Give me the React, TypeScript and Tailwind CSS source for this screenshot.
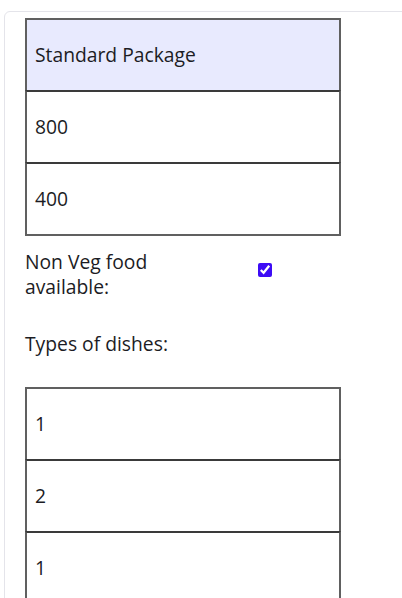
import React from 'react';

const Cell: React.FC<{ value: string; head?: boolean; first?: boolean; last?: boolean }> = ({ value, head, first, last }) => (
  <div
    className={`flex items-center px-[8px] border-x-2 border-t-2 border-[#606060] ${first ? '' : 'border-t-[#3a3a3a]'} ${
      last ? 'border-b-2 h-[74px]' : 'h-[72px]'
    } ${head ? 'bg-[#e8eafe]' : 'bg-white'}`}
  >
    {value}
  </div>
);

const ValueTable: React.FC<{ rows: string[]; head?: boolean }> = ({ rows, head }) => (
  <div className="w-[316px] flex flex-col">
    {rows.map((r, i) => (
      <Cell key={i} value={r} head={head && i === 0} first={i === 0} last={i === rows.length - 1} />
    ))}
  </div>
);

export default function App() {
  return (
    <div className="h-[598px] pl-[4px] pt-[11px] bg-white overflow-hidden" style={{ fontFamily: '"Open Sans", sans-serif' }}>
      <div className="w-[440px] border border-[#e4e4ea] rounded-[6px] pl-[20px] pt-[6px] pb-6 text-[19.3px] text-[#1c1c24]">
        <ValueTable rows={['Standard Package', '800', '400']} head />

        <div className="flex items-center mt-[13px] w-[316px]">
          <label className="w-[150px] leading-[25px]">Non Veg food available:</label>
          <input type="checkbox" defaultChecked className="ml-[83px] -mt-[9px] w-[14px] h-[14px] accent-[#3d0cf5]" />
        </div>

        <p className="mt-[32px] leading-[25px]">Types of dishes:</p>

        <div className="mt-[31px]">
          <ValueTable rows={['1', '2', '1']} />
        </div>
      </div>
    </div>
  );
}
